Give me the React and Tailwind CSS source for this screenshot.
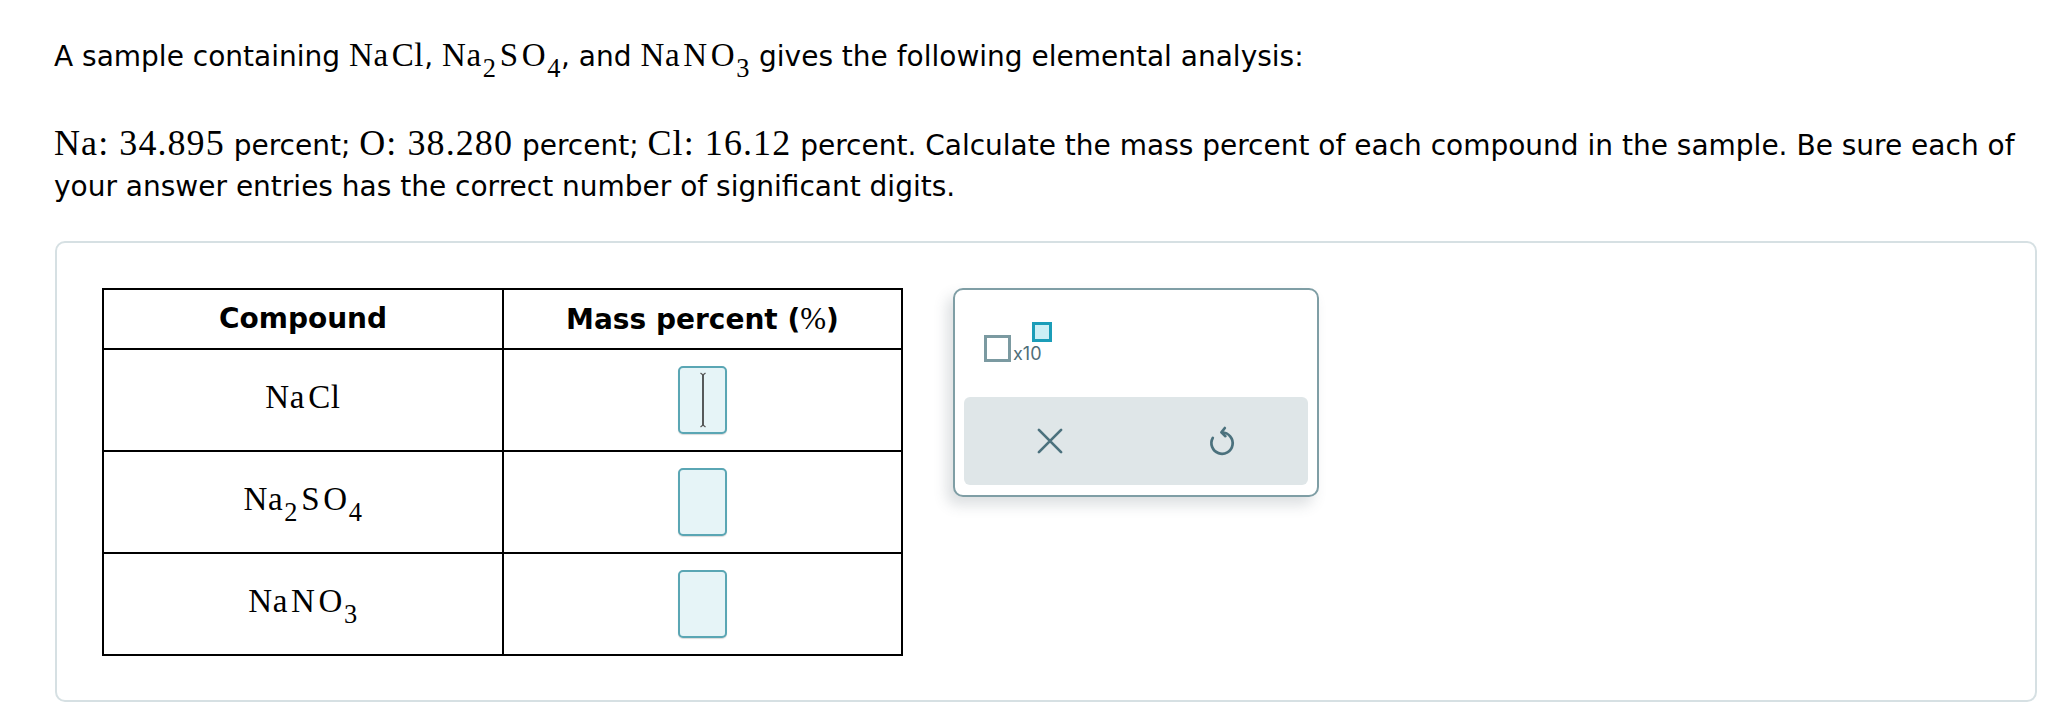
import React from 'react';

const SANS = "font-['DejaVu_Sans','Verdana',sans-serif]";
const SERIF = "font-['Liberation_Serif','Times_New_Roman',serif]";

// parts: [['Na'], ['S'], ...] with optional subscript
const Formula = ({ parts, size = 'text-[33px]' }) => (
    <span className={`${SERIF} ${size} font-normal tracking-[0.02em] whitespace-nowrap`}>
        {parts.map(([el, sub], i) => (
            <span key={i} className="inline-block mr-[3px] last:mr-0">
                {el}
                {sub && <span className="relative top-[0.4em] text-[0.8em] ml-[1px]">{sub}</span>}
            </span>
        ))}
    </span>
);

const NACL = [['Na'], ['Cl']];
const NA2SO4 = [['Na', '2'], ['S'], ['O', '4']];
const NANO3 = [['Na'], ['N'], ['O', '3']];

const Serif = ({ children }) => <span className={`${SERIF} text-[36px] tracking-[0.03em]`}>{children}</span>;

const AnswerBox = ({ cursor }) => (
    <div className="w-[49px] h-[68px] rounded-[5px] border-2 border-[#5aa6b4] bg-[#e6f4f7] shadow-[0_1px_1px_rgba(0,0,0,0.15)] flex items-center justify-center">
        {cursor && (
            <svg width="10" height="58" viewBox="0 0 10 58">
                <path d="M5 4 V54" stroke="#333" strokeWidth="1.6" />
                <path d="M2.5 2 L5 4 L7.5 2 M2.5 56 L5 54 L7.5 56" stroke="#555" strokeWidth="1.2" fill="none" />
            </svg>
        )}
    </div>
);

const rows = [
    { f: NACL, cursor: true },
    { f: NA2SO4 },
    { f: NANO3 },
];

const App = () => {
    return (
        <div className={`${SANS} bg-white text-black min-h-[718px] w-[2064px] pl-[54px] pr-[27px] pt-[35px] text-[28px] leading-[40px]`}>
            <p>
                A sample containing <Formula parts={NACL} />, <Formula parts={NA2SO4} />, and <Formula parts={NANO3} /> gives the following elemental analysis:
            </p>
            <p className="mt-[46px] leading-[41px] pr-[10px]">
                <Serif>Na: 34.895</Serif> percent; <Serif>O: 38.280</Serif> percent; <Serif>Cl: 16.12</Serif> percent. Calculate the mass percent of each compound in the sample. Be sure each of your answer entries has the correct number of significant digits.
            </p>

            <div className="mt-[34px] ml-[1px] border-2 border-[#d6e0e3] rounded-[10px] h-[461px] px-[45px] pt-[45px] flex items-start gap-[50px]">
                {/* table */}
                <table className="border-collapse border-2 border-black w-[801px]">
                    <thead>
                        <tr className="h-[60px]">
                            <th className="border-2 border-black w-[400px] font-bold text-[28px]">Compound</th>
                            <th className="border-2 border-black font-bold text-[28px]">
                                Mass percent (<span className={`${SERIF} font-normal text-[31px]`}>%</span>)
                            </th>
                        </tr>
                    </thead>
                    <tbody>
                        {rows.map((r, i) => (
                            <tr key={i} className="h-[102px]">
                                <td className="border-2 border-black text-center pb-[4px]">
                                    <Formula parts={r.f} />
                                </td>
                                <td className="border-2 border-black">
                                    <div className="flex justify-center">
                                        <AnswerBox cursor={r.cursor} />
                                    </div>
                                </td>
                            </tr>
                        ))}
                    </tbody>
                </table>

                {/* x10 widget */}
                <div className="w-[366px] h-[209px] rounded-[10px] border-2 border-[#7f9ea5] bg-white shadow-[-6px_8px_14px_rgba(60,80,90,0.18)] flex flex-col">
                    <div className="h-[107px] pl-[29px] pt-[31px] flex items-start">
                        <div className="relative flex items-end">
                            <div className="mt-[14px] w-[27px] h-[27px] border-[3px] border-[#7b9aa1]" />
                            <span className="text-[18px] leading-none text-[#4e6e78] ml-[2px] mb-[-1px] font-['Inter',sans-serif]">x10</span>
                            <div className="absolute left-[48px] top-[1px] w-[20px] h-[20px] border-[3px] border-[#1b9db8] bg-[#cdeff5]" />
                        </div>
                    </div>
                    <div className="mx-[9px] h-[88px] rounded-[6px] bg-[#dfe6e8] grid grid-cols-2 items-center justify-items-center">
                        <svg width="28" height="28" viewBox="0 0 24 24" fill="none" stroke="#4b717d" strokeWidth="2.3" strokeLinecap="round">
                            <path d="M2.5 2.5 L21.5 21.5 M21.5 2.5 L2.5 21.5" />
                        </svg>
                        <svg width="34" height="34" viewBox="0 0 24 24" fill="none" stroke="#4b717d" strokeWidth="1.9" strokeLinecap="round" strokeLinejoin="round">
                            <path d="M12 6 A7.5 7.5 0 1 1 5.5 9.8" />
                            <path d="M14 2.8 L11.6 5.9 L14.4 8.6" />
                        </svg>
                    </div>
                </div>
            </div>
        </div>
    );
};

export default App;
